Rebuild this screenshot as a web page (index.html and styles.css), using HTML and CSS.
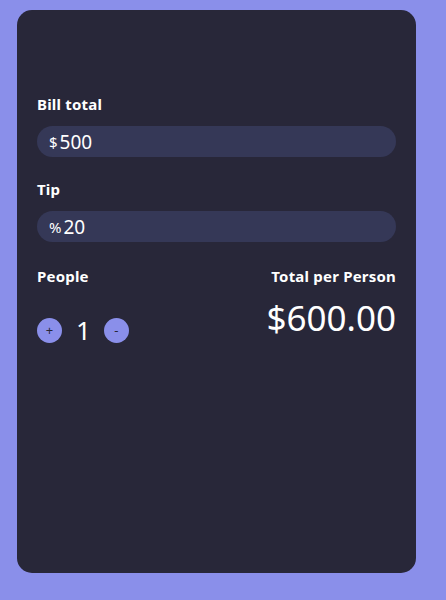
FILE: index.html
```html
<!DOCTYPE html>
<html lang="en">

<head>
    <meta charset="UTF-8">
    <meta name="viewport" content="width=device-width, initial-scale=1.0">
    <title>Tip Calculator</title>
    <link rel="stylesheet" href="styles.css">
</head>

<body>
    <div class="calculator">
        <label class="field-label" for="bill">Bill total</label>
        <div class="input-wrapper">
            <span class="input-prefix">$</span>
            <input id="bill" class="input-field" type="text" value="500">
        </div>

        <label class="field-label" for="tip">Tip</label>
        <div class="input-wrapper">
            <span class="input-prefix">%</span>
            <input id="tip" class="input-field" type="text" value="20">
        </div>

        <div class="summary">
            <div class="people">
                <div class="field-label">People</div>
                <div class="people-controls">
                    <button class="round-button">+</button>
                    <span class="people-count">1</span>
                    <button class="round-button">-</button>
                </div>
            </div>
            <div class="total">
                <div class="field-label">Total per Person</div>
                <div class="total-value">$600.00</div>
            </div>
        </div>
    </div>
</body>

</html>
```

FILE: styles.css
```css
* {
    box-sizing: border-box;
}

body {
    margin: 0;
    padding: 10px 30px 27px 17px;
    background-color: #8a8fea;
    font-family: 'Noto Sans', sans-serif;
    color: #ffffff;
}

.calculator {
    background-color: #282739;
    border-radius: 15px;
    height: 563px;
    padding: 84px 20px 20px 20px;
    display: flex;
    flex-direction: column;
}

.field-label {
    display: block;
    font-size: 15px;
    font-weight: 700;
    line-height: 20px;
    letter-spacing: 0.2px;
}

.input-wrapper {
    display: flex;
    align-items: center;
    height: 31px;
    margin: 12px 0 22px 0;
    padding: 0 12px;
    background-color: #353857;
    border-radius: 16px;
}

.input-prefix {
    font-size: 15px;
    margin-right: 2px;
}

.input-field {
    flex: 1;
    min-width: 0;
    background: transparent;
    border: none;
    outline: none;
    color: #ffffff;
    font-family: 'Noto Sans', sans-serif;
    font-size: 19px;
    padding: 0;
}

.summary {
    display: flex;
    justify-content: space-between;
    margin-top: 2px;
}

.people-controls {
    display: flex;
    align-items: center;
    margin-top: 29px;
}

.round-button {
    width: 25px;
    height: 25px;
    border-radius: 50%;
    border: none;
    padding: 0;
    background-color: #8a8fea;
    color: #282739;
    font-family: 'Noto Sans', sans-serif;
    font-size: 13px;
    line-height: 25px;
}

.people-count {
    font-size: 26px;
    line-height: 30px;
    margin: 0 13px 0 14px;
}

.total {
    text-align: right;
}

.total-value {
    font-size: 35px;
    line-height: 42px;
    margin-top: 11px;
}
```
